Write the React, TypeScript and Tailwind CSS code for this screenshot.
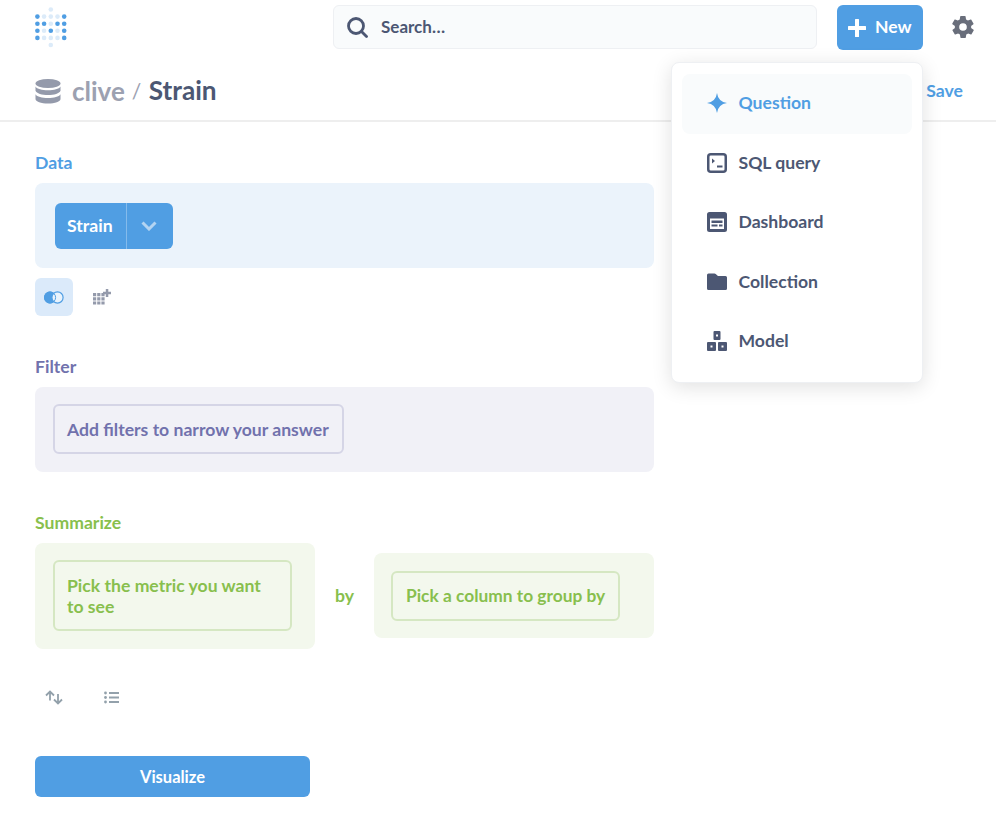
import React from "react";

const Logo = () => {
  const rows = [
    [0, 0, 2, 0, 0],
    [1, 2, 2, 2, 1],
    [1, 1, 2, 1, 1],
    [1, 2, 1, 2, 1],
    [1, 2, 2, 2, 1],
    [0, 0, 2, 0, 0],
  ];
  return (
    <svg width="32" height="42" viewBox="0 0 32 42" className="shrink-0">
      {rows.map((r, y) =>
        r.map((v, x) =>
          v ? <circle key={`${x}-${y}`} cx={2.4 + x * 6.7} cy={2.5 + y * 7.1} r="2.3" fill={v === 1 ? "#509ee3" : "#dcebf9"} /> : null
        )
      )}
    </svg>
  );
};

const Database = () => (
  <svg width="26" height="26" viewBox="0 0 26 26" fill="#949aab" className="shrink-0">
    <ellipse cx="13" cy="5.5" rx="12.5" ry="4.5" />
    <path d="M.5 8.5C2 11 7 12.2 13 12.2S24 11 25.5 8.5v4.2C24.5 15.4 19 17 13 17S1.5 15.4.5 12.7z" />
    <path d="M.5 16.2C2 18.8 7 19.9 13 19.9S24 18.8 25.5 16.2V21c0 2.5-5.5 4.5-12.5 4.5S.5 23.5.5 21z" />
  </svg>
);

const Sparkle = () => (
  <svg width="20" height="20" viewBox="0 0 20 20" fill="#509ee3">
    <path d="M10 0Q11.2 8.800 20 10Q11.2 11.200 10 20Q8.800 11.200 0 10Q8.800 8.800 10 0z" />
  </svg>
);
const Sql = () => (
  <svg width="20" height="20" viewBox="0 0 20 20" fill="none">
    <rect x="1.25" y="1.25" width="17.5" height="17.5" rx="2.5" stroke="#4c5773" strokeWidth="2.5" />
    <path d="M5 5.5l3 2.5-3 2.5z" fill="#4c5773" />
    <rect x="10" y="12.5" width="5.5" height="2" fill="#4c5773" />
  </svg>
);
const Dash = () => (
  <svg width="20" height="20" viewBox="0 0 20 20">
    <path fillRule="evenodd" fill="#4c5773" d="M2.5 0h15A2.5 2.5 0 0 1 20 2.5v15a2.5 2.5 0 0 1-2.5 2.500h-15A2.5 2.5 0 0 1 0 17.500v-15A2.5 2.5 0 0 1 2.5 0zM3 6.500V17h14V6.500zM4.500 8.500h11V11h-11zM4.500 12.500h6v2h-6zM12 12.500h3.500v2H12z" />
  </svg>
);
const Folder = () => (
  <svg width="20" height="20" viewBox="0 0 20 20" fill="#4c5773">
    <path d="M1.5 1.5h6c.5 0 .9.2 1.2.5L11 4h7.5A1.5 1.5 0 0 1 20 5.5v11a1.5 1.5 0 0 1-1.5 1.5h-17A1.5 1.5 0 0 1 0 16.5V3A1.5 1.5 0 0 1 1.5 1.5z" />
  </svg>
);
const Model = () => (
  <svg width="20" height="20" viewBox="0 0 20 20">
    <path fillRule="evenodd" fill="#4c5773" d="M7.5 0h5a1 1 0 0 1 1 1v7a1 1 0 0 1-1 1h-5a1 1 0 0 1-1-1V1a1 1 0 0 1 1-1zM9 3.5v2h2v-2zM1 11h7a1 1 0 0 1 1 1v7a1 1 0 0 1-1 1H1a1 1 0 0 1-1-1v-7a1 1 0 0 1 1-1zM3.5 14.5v2h2v-2zM12 11h7a1 1 0 0 1 1 1v7a1 1 0 0 1-1 1h-7a1 1 0 0 1-1-1v-7a1 1 0 0 1 1-1zM14.5 14.5v2h2v-2z" />
  </svg>
);

const Gear = () => (
  <svg width="24" height="24" viewBox="1.5 1 21 22" fill="#696e7b">
    <path d="M19.4 13c.1-.3.1-.7.1-1s0-.7-.1-1l2.1-1.6c.2-.2.3-.4.1-.7l-2-3.4c-.1-.2-.4-.3-.6-.2l-2.5 1c-.5-.4-1.1-.7-1.7-1l-.4-2.6c0-.3-.2-.5-.5-.5h-4c-.2 0-.5.2-.5.5l-.4 2.6c-.6.3-1.2.6-1.7 1l-2.5-1c-.2-.1-.5 0-.6.2l-2 3.4c-.1.3-.1.5.1.7L4.6 11c-.1.3-.1.7-.1 1s0 .7.1 1l-2.1 1.6c-.2.2-.3.4-.1.7l2 3.4c.1.2.4.3.6.2l2.5-1c.5.4 1.1.7 1.7 1l.4 2.6c0 .3.3.5.5.5h4c.3 0 .5-.2.5-.5l.4-2.6c.6-.3 1.2-.6 1.7-1l2.5 1c.2.1.5 0 .6-.2l2-3.4c.2-.3.1-.5-.1-.7zM12 15.5a3.5 3.5 0 1 1 0-7 3.5 3.5 0 0 1 0 7z" />
  </svg>
);

const items = [
  { label: "Question", icon: <Sparkle />, active: true },
  { label: "SQL query", icon: <Sql /> },
  { label: "Dashboard", icon: <Dash /> },
  { label: "Collection", icon: <Folder /> },
  { label: "Model", icon: <Model /> },
];

export default function App() {
  return (
    <div className="relative w-[996px] h-[816px] overflow-hidden bg-white font-['Lato',sans-serif] font-bold text-[#4c5773]">
      <header className="flex items-start h-[62px] pl-[35px] pt-[5px]">
        <div className="mt-[2px]"><Logo /></div>
        <div className="ml-[266px] flex items-center w-[484px] h-[44px] rounded-md border border-[#eef0f3] bg-[#f9fbfc] pl-[13px]">
          <svg width="21" height="21" viewBox="0 0 21 21" fill="none" stroke="#4c5773" strokeWidth="2.8">
            <circle cx="9" cy="9" r="7.5" />
            <path d="M14.5 14.5L19.5 19.5" strokeLinecap="round" />
          </svg>
          <span className="ml-[13px] text-[17px]">Search…</span>
        </div>
        <div className="ml-[20px] flex items-center w-[86px] h-[45px] rounded-md bg-[#509ee3] pl-[11px] text-white">
          <svg width="18" height="18" viewBox="0 0 18 18" fill="#fff">
            <rect x="7" width="4" height="18" rx=".5" />
            <rect y="7" width="18" height="4" rx=".5" />
          </svg>
          <span className="ml-[9px] text-[17.5px]">New</span>
        </div>
        <div className="ml-[28px] mt-[10px]"><Gear /></div>
      </header>

      <div className="flex items-center h-[58px] pl-[35px] pr-[33px] border-b-2 border-[#eeeeee] box-content">
        <Database />
        <span className="ml-[11px] text-[26px] text-[#9ca1b1]">clive</span>
        <span className="ml-[7px] text-[21px] font-normal text-[#9ca1b1]">/</span>
        <span className="ml-[7.5px] text-[26.2px]">Strain</span>
        <span className="ml-auto text-[17.6px] text-[#509ee3]">Save</span>
      </div>

      <main className="w-[619px] ml-[35px]">
        <div className="mt-[30px] text-[17.6px] leading-[21px] text-[#509ee3]">Data</div>
        <section className="mt-[10px] h-[85px] rounded-lg bg-[#ebf3fb] p-5">
          <div className="flex w-[118px] h-[46px] rounded-md bg-[#509ee3] text-white">
            <span className="flex items-center w-[72px] pl-3 border-r border-[#84bbec] text-[17.6px]">Strain</span>
            <span className="flex flex-1 items-center justify-center pr-[2px]">
              <svg width="16" height="10" viewBox="0 0 16 10" fill="none" stroke="#b3d4f2" strokeWidth="3">
                <path d="M1.5 1.5L8 8l6.5-6.5" />
              </svg>
            </span>
          </div>
        </section>
        <div className="mt-[10px] flex items-center">
          <div className="flex items-center justify-center w-[38px] h-[38px] rounded-md bg-[#dbeafa]">
            <svg width="20" height="13" viewBox="0 0 20 13">
              <circle cx="6" cy="6.5" r="6" fill="#509ee3" />
              <circle cx="13.5" cy="6.5" r="5.6" fill="#e9f3fc" stroke="#509ee3" strokeWidth="1.2" />
              <circle cx="6" cy="6.5" r="5.6" fill="none" stroke="#509ee3" strokeWidth="1" />
            </svg>
          </div>
          <svg width="18" height="17" viewBox="0 0 18 17" fill="#949aab" className="ml-[20px]">
            <path d="M0 4h3.200v3.200H0zM4.200 4h3.200v3.200H4.200zM8.400 4h3.200v3.200H8.400zM0 8.200h3.200v3.200H0zM4.200 8.200h3.200v3.200H4.200zM8.400 8.200h3.200v3.200H8.400zM0 12.400h3.200v3.200H0zM4.200 12.400h3.200v3.200H4.200zM8.400 12.400h3.200v3.200H8.400z" />
            <path d="M12.800 0h2.500v2.800H18v2.400h-2.700V8h-2.500V5.200H10V2.800h2.800z" />
          </svg>
        </div>

        <div className="mt-[40px] text-[17.6px] leading-[21px] text-[#7172ad]">Filter</div>
        <section className="mt-[10px] h-[85px] rounded-lg bg-[#f1f1f7] px-[18px] pt-[17px]">
          <div className="inline-flex items-center h-[50px] pt-[2px] pl-[12px] pr-[13px] rounded-md border-2 border-[#d5d5e6] text-[17.6px] text-[#7172ad]">
            Add filters to narrow your answer
          </div>
        </section>

        <div className="mt-[40px] text-[17.6px] leading-[21px] text-[#88bf4d]">Summarize</div>
        <div className="mt-[10px] flex items-start">
          <section className="w-[280px] h-[106px] rounded-lg bg-[#f3f8ed] px-[18px] pt-[17px]">
            <div className="flex items-center w-[239px] h-[71px] px-[12px] rounded-md border-2 border-[#d5e7c2] text-[17.6px] leading-[21px] text-[#88bf4d]">
              Pick the metric you want to see
            </div>
          </section>
          <span className="w-[59px] mt-[42px] text-center text-[17.6px] leading-[21px] text-[#88bf4d]">by</span>
          <section className="w-[280px] h-[85px] mt-[10px] rounded-lg bg-[#f3f8ed] flex items-center pl-[17px]">
            <div className="flex items-center h-[50px] pt-[2px] px-[13px] rounded-md border-2 border-[#d5e7c2] text-[17.35px] text-[#88bf4d]">
              Pick a column to group by
            </div>
          </section>
        </div>

        <div className="mt-[39px] flex items-center h-[18px] pl-[10px]">
          <svg width="18" height="15" viewBox="0 0 18 15" fill="none" stroke="#93a1ab" strokeWidth="1.8">
            <path d="M5 10.5V1.5M1 5.5l4-4 4 4" />
            <path d="M13 4v9.5M9 9.5l4 4 4-4" />
          </svg>
          <svg width="15" height="13" viewBox="0 0 15 13" fill="#93a1ab" className="ml-[41px]">
            <circle cx="1.5" cy="2" r="1.4" /><circle cx="1.5" cy="6.5" r="1.4" /><circle cx="1.5" cy="11" r="1.4" />
            <rect x="5" y="1" width="10" height="2" /><rect x="5" y="5.5" width="10" height="2" /><rect x="5" y="10" width="10" height="2" />
          </svg>
        </div>

        <div className="mt-[50px] flex items-center justify-center w-[275px] h-[41px] pt-[2px] rounded-md bg-[#509ee3] text-[16.5px] text-white">
          Visualize
        </div>
      </main>

      <div className="absolute left-[671px] top-[62px] w-[252px] h-[321px] rounded-lg border border-[#eef0f3] bg-white pt-[11px] px-[10px] shadow-[0_4px_20px_rgba(0,0,0,0.12)]">
        {items.map((it) => (
          <div
            key={it.label}
            className={`flex items-center h-[59.5px] pb-[1px] pl-[25px] rounded-lg text-[17.6px] ${it.active ? "bg-[#f9fbfc] text-[#509ee3]" : ""}`}
          >
            {it.icon}
            <span className="ml-[11.5px]">{it.label}</span>
          </div>
        ))}
      </div>
    </div>
  );
}
